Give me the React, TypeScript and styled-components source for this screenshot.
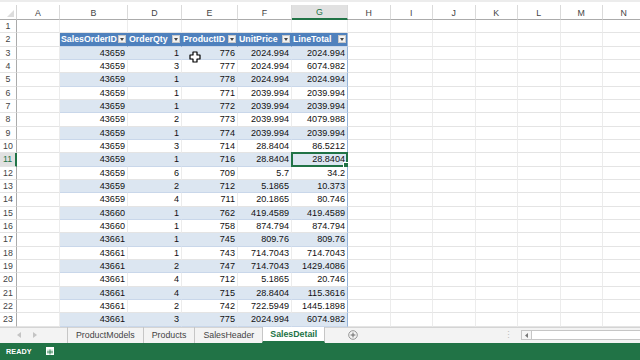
import React from "react";
import styled, { createGlobalStyle } from "styled-components";

/* Data */
const columns = [
  { letter: "", width: 17 },
  { letter: "A", width: 43 },
  { letter: "B", width: 68 },
  { letter: "D", width: 54 },
  { letter: "E", width: 56 },
  { letter: "F", width: 54 },
  { letter: "G", width: 56 },
  { letter: "H", width: 42.5 },
  { letter: "I", width: 42.5 },
  { letter: "J", width: 42.5 },
  { letter: "K", width: 42.5 },
  { letter: "L", width: 42.5 },
  { letter: "M", width: 42.5 },
  { letter: "N", width: 42.5 },
];

const headers = ["SalesOrderID", "OrderQty", "ProductID", "UnitPrice", "LineTotal"];

const rows: string[][] = [
  ["43659", "1", "776", "2024.994", "2024.994"],
  ["43659", "3", "777", "2024.994", "6074.982"],
  ["43659", "1", "778", "2024.994", "2024.994"],
  ["43659", "1", "771", "2039.994", "2039.994"],
  ["43659", "1", "772", "2039.994", "2039.994"],
  ["43659", "2", "773", "2039.994", "4079.988"],
  ["43659", "1", "774", "2039.994", "2039.994"],
  ["43659", "3", "714", "28.8404", "86.5212"],
  ["43659", "1", "716", "28.8404", "28.8404"],
  ["43659", "6", "709", "5.7", "34.2"],
  ["43659", "2", "712", "5.1865", "10.373"],
  ["43659", "4", "711", "20.1865", "80.746"],
  ["43660", "1", "762", "419.4589", "419.4589"],
  ["43660", "1", "758", "874.794", "874.794"],
  ["43661", "1", "745", "809.76", "809.76"],
  ["43661", "1", "743", "714.7043", "714.7043"],
  ["43661", "2", "747", "714.7043", "1429.4086"],
  ["43661", "4", "712", "5.1865", "20.746"],
  ["43661", "4", "715", "28.8404", "115.3616"],
  ["43661", "2", "742", "722.5949", "1445.1898"],
  ["43661", "3", "775", "2024.994", "6074.982"],
];

const sheets = ["ProductModels", "Products", "SalesHeader", "SalesDetail"];

const ACTIVE_ROW = 11;
const ACTIVE_COL = 6; // G

/* Styles */
const GlobalStyle = createGlobalStyle`
  html, body {
    margin: 0;
    padding: 0;
    background: #ffffff;
    overflow: hidden;
  }
  * {
    box-sizing: border-box;
  }
`;

const Frame = styled.div`
  position: relative;
  width: 640px;
  height: 360px;
  display: flex;
  flex-direction: column;
  font-family: "Liberation Sans", Arial, sans-serif;
  background: #ffffff;
  overflow: hidden;
`;

const TopStrip = styled.div`
  height: 5px;
  flex: none;
  background: #ffffff;
  border-top: 2px solid #ececec;
`;

const Sheet = styled.div`
  flex: none;
  display: grid;
  grid-template-columns: ${columns.map((c) => `${c.width}px`).join(" ")};
  grid-template-rows: 15px repeat(23, 13.333px);
  overflow: hidden;
`;

const Corner = styled.div`
  position: relative;
  border-right: 1px solid #d4d4d4;
  border-bottom: 1px solid #ababab;

  &::after {
    content: "";
    position: absolute;
    right: 2px;
    bottom: 2px;
    border-left: 7px solid transparent;
    border-bottom: 7px solid #dcdcdc;
  }
`;

const ColHead = styled.div<{ $active?: boolean }>`
  display: flex;
  align-items: center;
  justify-content: center;
  padding-top: 1px;
  font-size: 8.8px;
  color: ${(p) => (p.$active ? "#217346" : "#444444")};
  background: ${(p) => (p.$active ? "#e1e1e1" : "#ffffff")};
  border-right: 1px solid #dadada;
  border-bottom: ${(p) => (p.$active ? "2px solid #217346" : "1px solid #ababab")};
  white-space: nowrap;
`;

const RowHead = styled.div<{ $active?: boolean }>`
  display: flex;
  align-items: center;
  justify-content: center;
  font-size: 8.8px;
  color: ${(p) => (p.$active ? "#217346" : "#444444")};
  background: ${(p) => (p.$active ? "#e1e1e1" : "#ffffff")};
  border-right: ${(p) => (p.$active ? "2px solid #217346" : "1px solid #ababab")};
  border-bottom: 1px solid #e4e4e4;
`;

const Cell = styled.div<{ $kind: "plain" | "band" | "head"; $edge?: boolean }>`
  position: relative;
  display: flex;
  align-items: center;
  justify-content: ${(p) => (p.$kind === "head" ? "space-between" : "flex-end")};
  padding: ${(p) => (p.$kind === "head" ? "0 1px 0 1px" : "0 2px 0 2px")};
  font-size: ${(p) => (p.$kind === "head" ? 8.8 : 9.1)}px;
  font-weight: ${(p) => (p.$kind === "head" ? 700 : 400)};
  color: ${(p) => (p.$kind === "head" ? "#ffffff" : "#111111")};
  background: ${(p) =>
    p.$kind === "head" ? "#4f81bd" : p.$kind === "band" ? "#dce6f1" : "#ffffff"};
  border-right: 1px solid
    ${(p) =>
      p.$edge ? "#95b3d7" : p.$kind === "head" ? "#4f81bd" : p.$kind === "band" ? "#dce6f1" : "#ececec"};
  border-bottom: 1px solid ${(p) => (p.$kind === "plain" ? "#e4e4e4" : "#c9d7ea")};
  white-space: nowrap;
  overflow: visible;
`;

const Selected = styled.div`
  position: absolute;
  left: -1px;
  top: -1px;
  right: -1px;
  bottom: -1px;
  border: 2px solid #217346;
  pointer-events: none;

  &::after {
    content: "";
    position: absolute;
    right: -4px;
    bottom: -4px;
    width: 5px;
    height: 5px;
    background: #217346;
    border: 1px solid #ffffff;
  }
`;

const FilterBtn = styled.span`
  flex: none;
  width: 8px;
  height: 8px;
  display: flex;
  align-items: center;
  justify-content: center;
  background: #f2f2f2;
  border: 1px solid #c8c8c8;

  &::after {
    content: "";
    border-left: 2.5px solid transparent;
    border-right: 2.5px solid transparent;
    border-top: 3px solid #444444;
  }
`;

const TabBar = styled.div`
  flex: none;
  height: 16.3px;
  display: flex;
  align-items: stretch;
  background: #f3f3f3;
  border-top: 1px solid #d4d4d4;
`;

const TabNav = styled.div`
  width: 67px;
  display: flex;
  align-items: center;
  gap: 12px;
  padding-left: 17px;
`;

const Tab = styled.div<{ $active?: boolean }>`
  display: flex;
  align-items: center;
  padding: 0 ${(p) => (p.$active ? 7 : 8)}px;
  font-size: 8.8px;
  font-weight: ${(p) => (p.$active ? 700 : 400)};
  color: ${(p) => (p.$active ? "#217346" : "#444444")};
  background: ${(p) => (p.$active ? "#ffffff" : "transparent")};
  border-left: 1px solid #c6c6c6;
  border-right: ${(p) => (p.$active ? "1px solid #c6c6c6" : "none")};
  border-bottom: ${(p) => (p.$active ? "2px solid #217346" : "none")};
  margin-top: -1px;
  white-space: nowrap;
`;

const AddSheet = styled.div`
  display: flex;
  align-items: center;
  margin-left: 23px;
`;

const Splitter = styled.div`
  display: flex;
  align-items: center;
  margin-left: auto;
  margin-right: 8px;
  color: #bdbdbd;
  font-size: 9px;
`;

const ScrollBar = styled.div`
  width: 119px;
  height: 10px;
  align-self: center;
  display: flex;
  border: 1px solid #c6c6c6;
  border-right: none;
  background: #ffffff;
`;

const ScrollBtn = styled.div`
  width: 10px;
  display: flex;
  align-items: center;
  justify-content: center;
  border-right: 1px solid #c6c6c6;
  background: #f6f6f6;
`;

const StatusBar = styled.div`
  flex: 1;
  display: flex;
  align-items: center;
  gap: 14px;
  padding-left: 6px;
  background: #217346;
  color: #ffffff;
  font-size: 7.2px;
  font-weight: 700;
  letter-spacing: 0.1px;
`;

const Pointer = styled.svg`
  position: absolute;
  left: 189px;
  top: 51px;
`;

/* Main Component */
export default function App() {
  const cells: React.ReactNode[] = [];

  // column letters
  columns.forEach((c, i) =>
    cells.push(
      i === 0 ? (
        <Corner key="corner" />
      ) : (
        <ColHead key={`ch${i}`} $active={i === ACTIVE_COL}>
          {c.letter}
        </ColHead>
      )
    )
  );

  for (let r = 1; r <= 23; r++) {
    cells.push(
      <RowHead key={`rh${r}`} $active={r === ACTIVE_ROW}>
        {r}
      </RowHead>
    );
    for (let c = 1; c < columns.length; c++) {
      const inTable = r >= 2 && c >= 2 && c <= 6;
      if (!inTable) {
        cells.push(<Cell key={`c${r}-${c}`} $kind="plain" />);
        continue;
      }
      const edge = c === 6;
      if (r === 2) {
        cells.push(
          <Cell key={`c${r}-${c}`} $kind="head" $edge={edge}>
            <span>{headers[c - 2]}</span>
            <FilterBtn />
          </Cell>
        );
        continue;
      }
      const kind = r % 2 === 1 ? "band" : "plain";
      cells.push(
        <Cell key={`c${r}-${c}`} $kind={kind} $edge={edge}>
          {rows[r - 3][c - 2]}
          {r === ACTIVE_ROW && c === ACTIVE_COL && <Selected />}
        </Cell>
      );
    }
  }

  return (
    <Frame>
      <GlobalStyle />
      <TopStrip />
      <Sheet>{cells}</Sheet>
      <TabBar>
        <TabNav>
          <svg width="4" height="6" viewBox="0 0 4 6">
            <polygon points="4,0 0,3 4,6" fill="#c4c4c4" />
          </svg>
          <svg width="4" height="6" viewBox="0 0 4 6">
            <polygon points="0,0 4,3 0,6" fill="#c4c4c4" />
          </svg>
        </TabNav>
        {sheets.map((s) => (
          <Tab key={s} $active={s === "SalesDetail"}>
            {s}
          </Tab>
        ))}
        <AddSheet>
          <svg width="10" height="10" viewBox="0 0 10 10">
            <circle cx="5" cy="5" r="4.3" fill="none" stroke="#8a8a8a" strokeWidth="0.9" />
            <path d="M5 2.6v4.8M2.6 5h4.8" stroke="#6a6a6a" strokeWidth="1" />
          </svg>
        </AddSheet>
        <Splitter>⋮</Splitter>
        <ScrollBar>
          <ScrollBtn>
            <svg width="3" height="5" viewBox="0 0 3 5">
              <polygon points="3,0 0,2.5 3,5" fill="#777777" />
            </svg>
          </ScrollBtn>
        </ScrollBar>
      </TabBar>
      <StatusBar>
        <span>READY</span>
        <svg width="8" height="8" viewBox="0 0 8 8">
          <rect x="0.5" y="0.5" width="7" height="7" fill="#cfe3d6" stroke="#ffffff" strokeWidth="1" />
          <rect x="1" y="1" width="6" height="1.5" fill="#ffffff" />
          <path d="M4 2.5v5M1 5h6" stroke="#217346" strokeWidth="0.8" />
        </svg>
      </StatusBar>
      <Pointer width="12" height="12" viewBox="0 0 12 12">
        <path
          d="M4 1h4v3h3v4H8v3H4V8H1V4h3z"
          fill="#ffffff"
          stroke="#000000"
          strokeWidth="1.2"
          strokeLinejoin="round"
        />
      </Pointer>
    </Frame>
  );
}
